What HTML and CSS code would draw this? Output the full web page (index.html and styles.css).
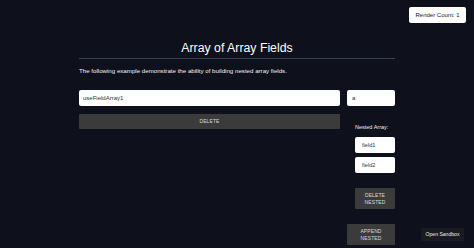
FILE: index.html
```html
<!DOCTYPE html>
<html>
<head>
<meta charset="utf-8">
<link rel="stylesheet" href="styles.css">
</head>
<body>
<div class="render-count">Render Count: 1</div>
<div class="page">
  <h1 class="title">Array of Array Fields</h1>
  <p class="desc">The following example demonstrate the ability of building nested array fields.</p>
  <div class="row">
    <div class="left">
      <input class="field" value="useFieldArray1">
      <button class="btn btn-wide">Delete</button>
    </div>
    <div class="right">
      <input class="field field-small" value="a">
      <div class="nested">
        <div class="nested-label">Nested Array:</div>
        <input class="field field-nested" value="field1">
        <input class="field field-nested field-gap" value="field2">
        <button class="btn btn-block btn-delete-nested">Delete<br>Nested</button>
      </div>
      <button class="btn btn-block btn-append">Append<br>Nested</button>
    </div>
  </div>
</div>
<button class="sandbox">Open Sandbox</button>
</body>
</html>
```
FILE: styles.css
```css
html, body {
  margin: 0;
  padding: 0;
  height: 100%;
}
body {
  background: #0e101c;
  color: #ffffff;
  font-family: "Liberation Sans", Arial, sans-serif;
  position: relative;
  overflow: hidden;
}
.render-count {
  position: absolute;
  top: 7px;
  right: 8px;
  width: 57px;
  height: 16px;
  box-sizing: border-box;
  background: #ffffff;
  color: #222222;
  border-radius: 2px;
  font-size: 6px;
  line-height: 16px;
  text-align: center;
}
.page {
  width: 316px;
  margin: 0 auto;
  padding-top: 41px;
}
.title {
  margin: 0;
  font-size: 12.3px;
  line-height: 14px;
  font-weight: normal;
  text-align: center;
  padding-bottom: 3px;
  border-bottom: 1px solid #3a3e52;
}
.desc {
  margin: 8px 0 0;
  font-size: 6.15px;
  line-height: 8px;
  color: #f2f2f2;
}
.row {
  display: flex;
  gap: 7px;
  margin-top: 15px;
}
.left {
  flex: 1;
  display: flex;
  flex-direction: column;
}
.right {
  width: 48px;
  display: flex;
  flex-direction: column;
}
.field {
  display: block;
  box-sizing: border-box;
  width: 100%;
  height: 16px;
  border: none;
  border-radius: 2px;
  background: #ffffff;
  color: #333333;
  font-family: "Liberation Sans", Arial, sans-serif;
  font-size: 6px;
  padding: 0 4px;
  margin: 0;
  outline: none;
}
.field-small {
  padding-left: 5px;
}
.field-nested {
  padding-left: 7px;
  font-size: 5.6px;
}
.field-gap {
  margin-top: 4px;
}
.nested {
  padding-left: 8px;
  display: flex;
  flex-direction: column;
}
.nested-label {
  margin-top: 17px;
  font-size: 5.5px;
  line-height: 8px;
  color: #eeeeee;
  margin-bottom: 6px;
}
.btn {
  display: block;
  border: none;
  border-radius: 1px;
  background: #3b3b3b;
  color: #d8d8d8;
  font-family: "Liberation Sans", Arial, sans-serif;
  text-transform: uppercase;
  font-size: 5px;
  letter-spacing: 0.1px;
  line-height: 6.2px;
  padding: 0;
  margin: 0;
  text-align: center;
}
.btn-wide {
  margin-top: 8px;
  width: 100%;
  height: 15px;
}
.btn-block {
  width: 100%;
  height: 21px;
}
.btn-delete-nested {
  margin-top: 15px;
}
.btn-append {
  margin-top: 15px;
}
.sandbox {
  position: absolute;
  left: 421px;
  top: 228px;
  width: 43px;
  height: 13px;
  border: none;
  border-radius: 1px;
  background: #191b22;
  color: #eeeeee;
  font-family: "Liberation Sans", Arial, sans-serif;
  font-size: 5.1px;
  line-height: 13px;
  padding: 0;
  margin: 0;
  text-align: center;
}
```
